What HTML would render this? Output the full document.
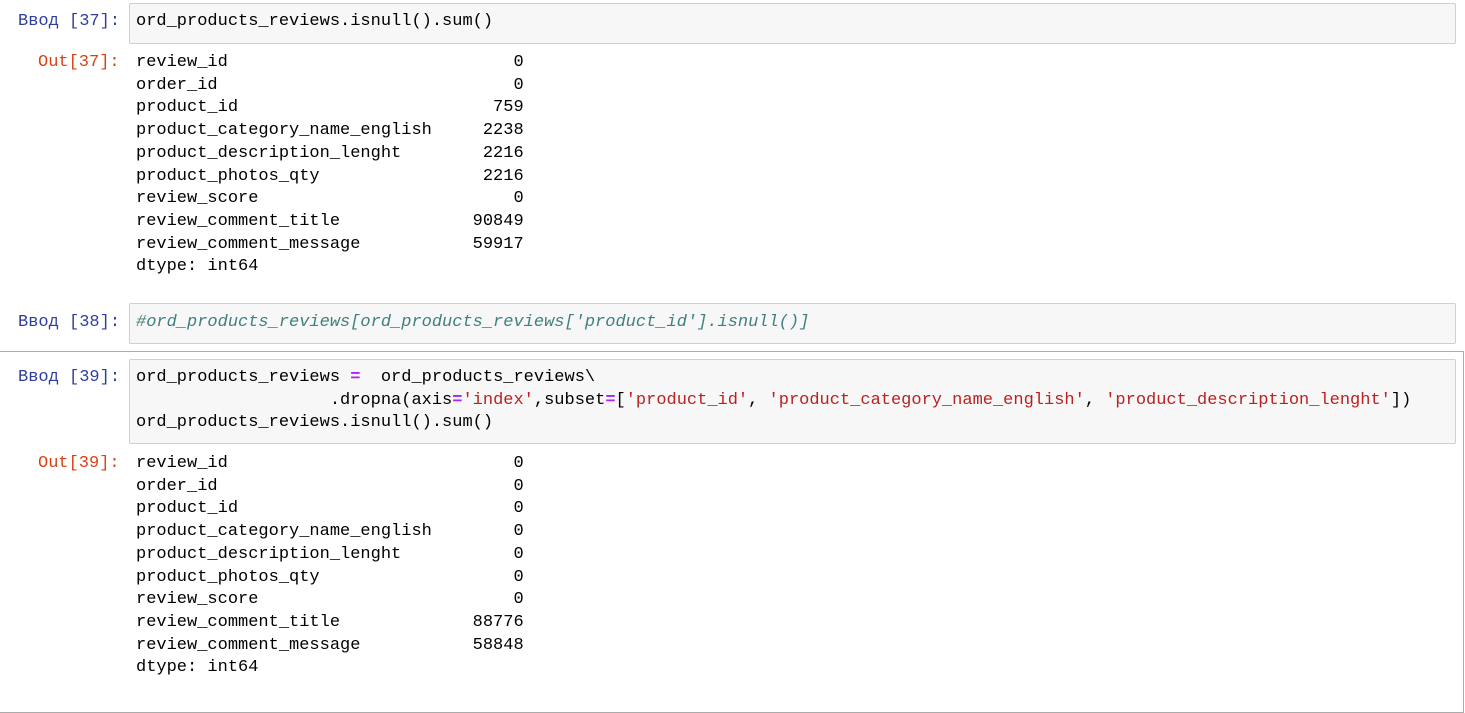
<!DOCTYPE html>
<html><head><meta charset="utf-8"><style>
body{margin:0;background:#fff;width:1465px;height:695px;overflow:hidden;position:relative;font-family:"Liberation Mono","DejaVu Sans Mono",monospace;font-size:17px;}
.p{position:absolute;white-space:pre;line-height:22.7px;}
.in{color:#303F9F;}
.out{color:#D84315;}
.box{position:absolute;left:129px;width:1325px;background:#f7f7f7;border:1px solid #cfcfcf;border-radius:2px;}
.sel{position:absolute;left:-2px;top:351px;width:1464px;height:360px;border:1px solid #ababab;}
.k{color:#AA22FF;font-weight:bold}
.s{color:#BA2121}
.c{color:#408080;font-style:italic}
</style></head><body>
<div class="sel"></div>
<div class="box" style="top:3px;height:39px"></div>
<div class="p in" style="left:18px;top:11px">Ввод [37]:</div>
<div class="p" style="left:136px;top:11px">ord_products_reviews.isnull().sum()</div>
<div class="p out" style="left:38px;top:52px">Out[37]:</div>
<div class="p" style="left:136px;top:52px">review_id                            0
order_id                             0
product_id                         759
product_category_name_english     2238
product_description_lenght        2216
product_photos_qty                2216
review_score                         0
review_comment_title             90849
review_comment_message           59917
dtype: int64</div>
<div class="box" style="top:303px;height:39px"></div>
<div class="p in" style="left:18px;top:312px">Ввод [38]:</div>
<div class="p c" style="left:136px;top:312px">#ord_products_reviews[ord_products_reviews['product_id'].isnull()]</div>
<div class="box" style="top:359px;height:83px"></div>
<div class="p in" style="left:18px;top:367px">Ввод [39]:</div>
<div class="p" style="left:136px;top:367px">ord_products_reviews <span class="k">=</span>  ord_products_reviews\
                   .dropna(axis<span class="k">=</span><span class="s">'index'</span>,subset<span class="k">=</span>[<span class="s">'product_id'</span>, <span class="s">'product_category_name_english'</span>, <span class="s">'product_description_lenght'</span>])
ord_products_reviews.isnull().sum()</div>
<div class="p out" style="left:38px;top:453px">Out[39]:</div>
<div class="p" style="left:136px;top:453px">review_id                            0
order_id                             0
product_id                           0
product_category_name_english        0
product_description_lenght           0
product_photos_qty                   0
review_score                         0
review_comment_title             88776
review_comment_message           58848
dtype: int64</div>
</body></html>
